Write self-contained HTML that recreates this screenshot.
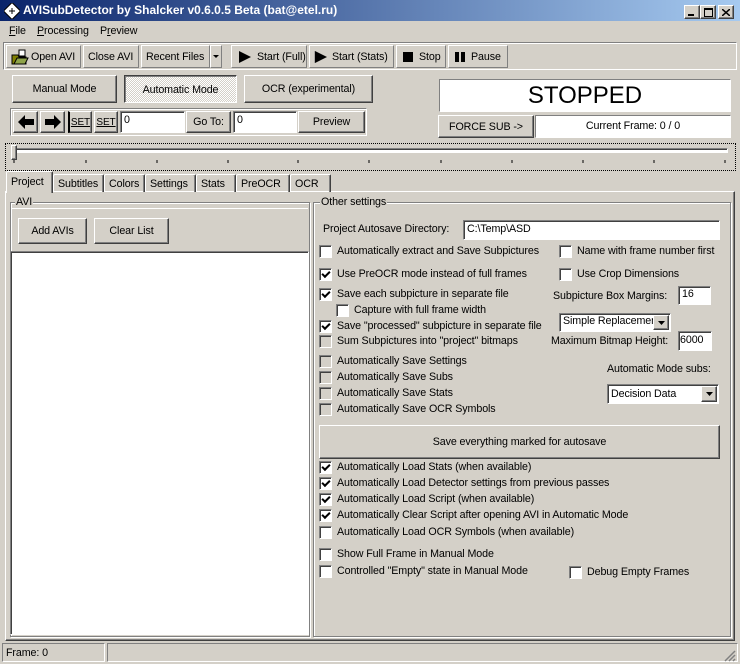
<!DOCTYPE html>
<html><head><meta charset="utf-8"><style>
*{box-sizing:border-box}
body{margin:0;width:740px;height:664px;background:#d4d0c8;font-family:"Liberation Sans",sans-serif;font-size:10.7px;letter-spacing:-0.1px;color:#000;position:relative;overflow:hidden}
.a{position:absolute}
.btn{position:absolute;background:#d4d0c8;border:1px solid;border-color:#fff #404040 #404040 #fff;box-shadow:inset -1px -1px 0 #808080;display:flex;align-items:center;justify-content:center;white-space:nowrap}
.tb{position:absolute;border:1px solid;border-color:#fff #808080 #808080 #fff;display:flex;align-items:center;white-space:nowrap;padding-left:4px}
.edit{position:absolute;background:#fff;border:1px solid;border-color:#808080 #fff #fff #808080;box-shadow:inset 1px 1px 0 #404040;padding:2px 3px;white-space:nowrap;overflow:hidden}
.grp{position:absolute;border:1px solid #808080;box-shadow:1px 1px 0 #fff,inset 1px 1px 0 #fff}
.gl{position:absolute;top:-7px;left:6px;background:#d4d0c8;padding:0 1px}
.cb{position:absolute;white-space:nowrap;height:14px;line-height:13px;padding-left:18px}
.cb::before{content:"";position:absolute;left:0;top:0;width:13px;height:13px;background:#fff;border:1px solid;border-color:#808080 #fff #fff #808080;box-shadow:inset 1px 1px 0 #404040;box-sizing:border-box}
.cb.c::after{content:"";position:absolute;left:3px;top:3px;width:6px;height:3px;border-left:2px solid #000;border-bottom:2px solid #000;transform:rotate(-45deg);transform-origin:center}
.cb.d::before{background:#d4d0c8}
.tab{position:absolute;top:174px;height:18px;border:1px solid;border-color:#fff #404040 transparent #fff;border-bottom:none;border-radius:2px 2px 0 0;box-shadow:inset -1px 0 0 #808080;padding:3px 4px 0;white-space:nowrap}
</style></head><body>
<div class="a" style="left:0;top:0;width:740px;height:21px;background:linear-gradient(90deg,#0a246a,#a6caf0)"></div>
<svg class="a" style="left:4px;top:3px" width="16" height="16"><rect x="2" y="2" width="12" height="12" fill="#fff" stroke="#000" transform="rotate(45 8 8)"/><path d="M5 8h6M8 5v6" stroke="#000"/></svg>
<div class="a" style="left:23px;top:3px;color:#fff;font-weight:bold;font-size:12px;letter-spacing:0">AVISubDetector by Shalcker v0.6.0.5 Beta (bat@etel.ru)</div>
<div class="btn" style="left:684px;top:5px;width:16px;height:14px"><svg width="8" height="8"><rect x="0" y="6" width="6" height="2"/></svg></div>
<div class="btn" style="left:700px;top:5px;width:16px;height:14px"><svg width="9" height="9"><rect x=".5" y=".5" width="8" height="8" fill="none" stroke="#000"/><rect x="0" y="0" width="9" height="2"/></svg></div>
<div class="btn" style="left:718px;top:5px;width:16px;height:14px"><svg width="8" height="7"><path d="M0 0L8 7M8 0L0 7" stroke="#000" stroke-width="1.5"/></svg></div>
<div class="a" style="left:9px;top:25px"><u>F</u>ile</div>
<div class="a" style="left:37px;top:25px"><u>P</u>rocessing</div>
<div class="a" style="left:100px;top:25px">P<u>r</u>eview</div>
<div class="a" style="left:3px;top:42px;width:734px;height:28px;border:1px solid;border-color:#808080 #fff #fff #808080;box-shadow:inset 1px 1px 0 #fff"></div>
<div class="tb" style="left:6px;top:45px;width:75px;height:23px"><svg width="18" height="16" style="margin-right:2px"><path d="M1 6h6l1 2h7v7H1z" fill="#808000" stroke="#000"/><path d="M3 15l3-6h11l-3 6z" fill="#8fa44a" stroke="#000"/><rect x="8" y="1" width="6" height="6" fill="#fff" stroke="#000"/></svg>Open AVI</div>
<div class="tb" style="left:83px;top:45px;width:56px;height:23px">Close AVI</div>
<div class="tb" style="left:141px;top:45px;width:69px;height:23px">Recent Files</div>
<div class="tb" style="left:210px;top:45px;width:12px;height:23px;padding-left:2px"><svg width="6" height="4"><path d="M0 0h6L3 3z"/></svg></div>
<div class="tb" style="left:231px;top:45px;width:76px;height:23px"><svg width="14" height="12" style="margin:0 5px 0 2px"><path d="M1 0L13 6L1 12z"/></svg>Start (Full)</div>
<div class="tb" style="left:309px;top:45px;width:85px;height:23px"><svg width="14" height="12" style="margin:0 4px 0 0"><path d="M1 0L13 6L1 12z"/><path d="M0 0v12" stroke="#808080"/></svg>Start (Stats)</div>
<div class="tb" style="left:396px;top:45px;width:50px;height:23px"><svg width="10" height="10" style="margin:0 6px 0 2px"><rect width="10" height="10"/></svg>Stop</div>
<div class="tb" style="left:448px;top:45px;width:60px;height:23px"><svg width="10" height="10" style="margin:0 6px 0 2px"><rect width="4" height="10"/><rect x="6" width="4" height="10"/></svg>Pause</div>
<div class="btn" style="left:12px;top:75px;width:105px;height:28px">Manual Mode</div>
<div class="btn" style="left:124px;top:75px;width:113px;height:28px;border-color:#404040 #fff #fff #404040;box-shadow:inset 1px 1px 0 #808080;background:repeating-conic-gradient(#fff 0 25%,#d4d0c8 0 50%) 0 0/2px 2px;padding-top:2px">Automatic Mode</div>
<div class="btn" style="left:244px;top:75px;width:129px;height:28px">OCR (experimental)</div>
<div class="a" style="left:10px;top:108px;width:357px;height:28px;border:1px solid;border-color:#808080 #fff #fff #808080;box-shadow:inset 1px 1px 0 #fff"></div>
<div class="btn" style="left:13px;top:111px;width:25px;height:22px"><svg width="16" height="14"><path d="M0 7L7 0v4h9v6H7v4z"/></svg></div>
<div class="btn" style="left:40px;top:111px;width:25px;height:22px"><svg width="16" height="14"><path d="M16 7L9 0v4H0v6h9v4z"/></svg></div>
<div class="btn" style="left:68px;top:111px;width:24px;height:22px;font-size:10px;text-decoration:underline;border-left:2px solid #000">SET</div>
<div class="btn" style="left:94px;top:111px;width:24px;height:22px;font-size:10px;text-decoration:underline">SET</div>
<div class="edit" style="left:120px;top:111px;width:65px;height:22px">0</div>
<div class="btn" style="left:186px;top:111px;width:45px;height:22px">Go To:</div>
<div class="edit" style="left:233px;top:111px;width:64px;height:22px">0</div>
<div class="btn" style="left:298px;top:111px;width:67px;height:22px">Preview</div>
<div class="a" style="left:439px;top:79px;width:292px;height:33px;background:#fff;border:1px solid;border-color:#808080 #fff #fff #808080;text-align:center;font-size:24px;line-height:31px;letter-spacing:0">STOPPED</div>
<div class="btn" style="left:438px;top:115px;width:96px;height:23px">FORCE SUB -&gt;</div>
<div class="a" style="left:535px;top:115px;width:196px;height:23px;background:#fff;border:1px solid;border-color:#808080 #fff #fff #808080;text-align:center;line-height:21px">Current Frame: 0 / 0</div>
<div class="a" style="left:5px;top:143px;width:731px;height:28px;border:1px dotted #000"></div>
<div class="a" style="left:12px;top:148px;width:716px;height:5px;background:#fff;border:1px solid;border-color:#808080 #fff #fff #808080;box-shadow:inset 1px 1px 0 #404040"></div>
<div class="btn" style="left:11px;top:145px;width:6px;height:15px"></div>
<svg class="a" style="left:0;top:160px" width="740" height="5"><g stroke="#000"><path d="M14 0v3M86 0v3M157 0v3M228 0v3M298 0v3M369 0v3M441 0v3M512 0v3M583 0v3M654 0v3M725 0v3"/></g></svg>
<div class="a" style="left:5px;top:191px;width:730px;height:450px;border:1px solid;border-color:#fff #404040 #404040 #fff;box-shadow:inset -1px -1px 0 #808080"></div>
<div class="tab" style="left:53px;width:51px">Subtitles</div>
<div class="tab" style="left:104px;width:41px">Colors</div>
<div class="tab" style="left:145px;width:51px">Settings</div>
<div class="tab" style="left:196px;width:40px">Stats</div>
<div class="tab" style="left:236px;width:54px">PreOCR</div>
<div class="tab" style="left:290px;width:41px">OCR</div>
<div class="tab" style="left:6px;top:171px;width:47px;height:22px;background:#d4d0c8;padding-top:4px">Project</div>
<div class="grp" style="left:10px;top:202px;width:300px;height:435px"><span class="gl" style="left:4px">AVI</span></div>
<div class="a" style="left:11px;top:208px;width:297px;height:43px;border-top:1px solid #fff"></div>
<div class="btn" style="left:18px;top:218px;width:69px;height:26px">Add AVIs</div>
<div class="btn" style="left:94px;top:218px;width:75px;height:26px">Clear List</div>
<div class="a" style="left:10px;top:251px;width:299px;height:384px;background:#fff;border:1px solid;border-color:#808080 #fff #fff #808080;box-shadow:inset 1px 1px 0 #404040"></div>
<div class="grp" style="left:313px;top:202px;width:418px;height:435px"><span class="gl">Other settings</span></div>
<div class="a" style="left:323px;top:223px">Project Autosave Directory:</div>
<div class="edit" style="left:463px;top:220px;width:257px;height:20px;padding-top:2px">C:\Temp\ASD</div>
<div class="cb" style="left:319px;top:245px">Automatically extract and Save Subpictures</div>
<div class="cb" style="left:559px;top:245px">Name with frame number first</div>
<div class="cb c" style="left:319px;top:268px">Use PreOCR mode instead of full frames</div>
<div class="cb" style="left:559px;top:268px">Use Crop Dimensions</div>
<div class="cb c" style="left:319px;top:288px">Save each subpicture in separate file</div>
<div class="a" style="left:553px;top:290px">Subpicture Box Margins:</div>
<div class="edit" style="left:678px;top:286px;width:33px;height:19px;padding-top:1px">16</div>
<div class="cb" style="left:336px;top:304px">Capture with full frame width</div>
<div class="cb c" style="left:319px;top:320px">Save "processed" subpicture in separate file</div>
<div class="edit" style="left:559px;top:313px;width:112px;height:19px;padding-top:1px">Simple Replacemer</div>
<div class="btn" style="left:653px;top:315px;width:16px;height:15px"><svg width="7" height="4"><path d="M0 0h7L3.5 4z"/></svg></div>
<div class="cb d" style="left:319px;top:335px">Sum Subpictures into "project" bitmaps</div>
<div class="a" style="left:551px;top:335px">Maximum Bitmap Height:</div>
<div class="edit" style="left:678px;top:331px;width:34px;height:20px;padding:2px 1px">6000</div>
<div class="cb d" style="left:319px;top:355px">Automatically Save Settings</div>
<div class="cb d" style="left:319px;top:371px">Automatically Save Subs</div>
<div class="cb d" style="left:319px;top:387px">Automatically Save Stats</div>
<div class="cb d" style="left:319px;top:403px">Automatically Save OCR Symbols</div>
<div class="a" style="left:607px;top:363px">Automatic Mode subs:</div>
<div class="edit" style="left:607px;top:384px;width:112px;height:20px;padding-top:3px">Decision Data</div>
<div class="btn" style="left:701px;top:386px;width:16px;height:16px"><svg width="7" height="4"><path d="M0 0h7L3.5 4z"/></svg></div>
<div class="btn" style="left:319px;top:425px;width:401px;height:34px">Save everything marked for autosave</div>
<div class="cb c" style="left:319px;top:461px">Automatically Load Stats (when available)</div>
<div class="cb c" style="left:319px;top:477px">Automatically Load Detector settings from previous passes</div>
<div class="cb c" style="left:319px;top:493px">Automatically Load Script (when available)</div>
<div class="cb c" style="left:319px;top:509px">Automatically Clear Script after opening AVI in Automatic Mode</div>
<div class="cb" style="left:319px;top:526px">Automatically Load OCR Symbols (when available)</div>
<div class="cb" style="left:319px;top:548px">Show Full Frame in Manual Mode</div>
<div class="cb" style="left:319px;top:565px">Controlled "Empty" state in Manual Mode</div>
<div class="cb" style="left:569px;top:566px">Debug Empty Frames</div>
<div class="a" style="left:2px;top:643px;width:103px;height:19px;border:1px solid;border-color:#808080 #fff #fff #808080;padding:3px 3px">Frame: 0</div>
<div class="a" style="left:107px;top:643px;width:631px;height:19px;border:1px solid;border-color:#808080 #fff #fff #808080"></div>
<svg class="a" style="left:724px;top:650px" width="12" height="12"><path d="M11 1L1 11M11 5L5 11M11 9L9 11" stroke="#808080" stroke-width="1.5"/></svg>
</body></html>
